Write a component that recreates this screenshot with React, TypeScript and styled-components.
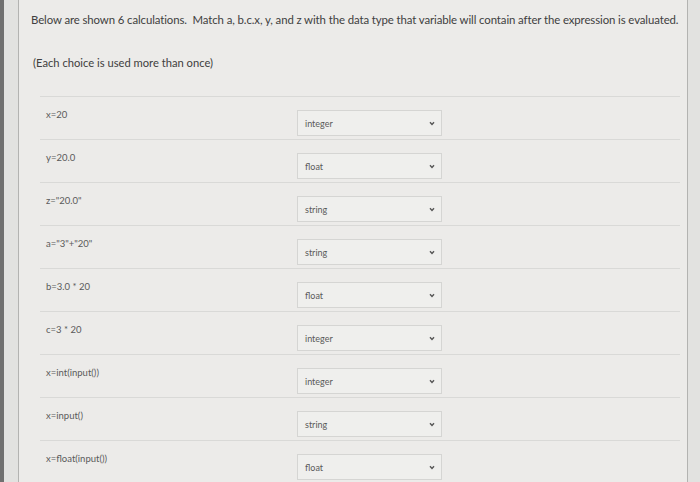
import React from 'react';
import styled, { createGlobalStyle } from 'styled-components';

const GlobalStyle = createGlobalStyle`
  html, body {
    margin: 0;
    padding: 0;
    background: #e3e3e1;
    font-family: Lato, 'Open Sans', sans-serif;
  }
`;

const Page = styled.div`
  display: flex;
  height: 482px;
  overflow: hidden;
  border-left: 4px solid #707070;
  padding-left: 14px;
  background: #e2e2e0;
`;

const Card = styled.div`
  width: 670px;
  background: #ecebe9;
  border-left: 1px solid #b3b3b1;
  border-right: 1px solid #b3b3b1;
  padding: 13px 0 0 12px;
  box-sizing: border-box;
`;

const Question = styled.p`
  margin: 0;
  font-size: 11.4px;
  line-height: 14px;
  color: #404040;
  white-space: nowrap;
  letter-spacing: -0.1px;
`;

const Note = styled.p`
  margin: 29px 0 0 2px;
  font-size: 11.2px;
  line-height: 14px;
  color: #404040;
`;

const Rows = styled.div`
  margin: 26px 0 0 9px;
  width: 640px;
`;

const Row = styled.div`
  display: grid;
  grid-template-columns: 257px 145px;
  height: 43px;
  border-top: 1px solid #d9d9d7;
  box-sizing: border-box;
`;

const Expr = styled.div`
  padding: 12px 0 0 6px;
  font-size: 9.5px;
  line-height: 11px;
  color: #5a5a5a;
`;

const Select = styled.div`
  margin-top: 13px;
  height: 26px;
  box-sizing: border-box;
  background: #efefed;
  border: 1px solid #d5d5d3;
  display: flex;
  align-items: center;
  justify-content: space-between;
  padding: 0 6px 0 7px;
  font-size: 9px;
  color: #5a5a5a;
`;

const Chevron = () => (
  <svg width="6" height="5" viewBox="0 0 6 5">
    <path d="M1 1.2 L3 3.4 L5 1.2" fill="none" stroke="#555" strokeWidth="1.4" />
  </svg>
);

const items = [
  { expr: 'x=20', type: 'integer' },
  { expr: 'y=20.0', type: 'float' },
  { expr: 'z="20.0"', type: 'string' },
  { expr: 'a="3"+"20"', type: 'string' },
  { expr: 'b=3.0 * 20', type: 'float' },
  { expr: 'c=3 * 20', type: 'integer' },
  { expr: 'x=int(input())', type: 'integer' },
  { expr: 'x=input()', type: 'string' },
  { expr: 'x=float(input())', type: 'float' },
];

export default function App() {
  return (
    <>
      <GlobalStyle />
      <Page>
        <Card>
          <Question>
            Below are shown 6 calculations.&nbsp; Match a, b.c.x, y, and z with the data type that variable will contain after the expression is evaluated.
          </Question>
          <Note>(Each choice is used more than once)</Note>
          <Rows>
            {items.map((it, i) => (
              <Row key={i}>
                <Expr>{it.expr}</Expr>
                <Select>
                  <span>{it.type}</span>
                  <Chevron />
                </Select>
              </Row>
            ))}
          </Rows>
        </Card>
      </Page>
    </>
  );
}
